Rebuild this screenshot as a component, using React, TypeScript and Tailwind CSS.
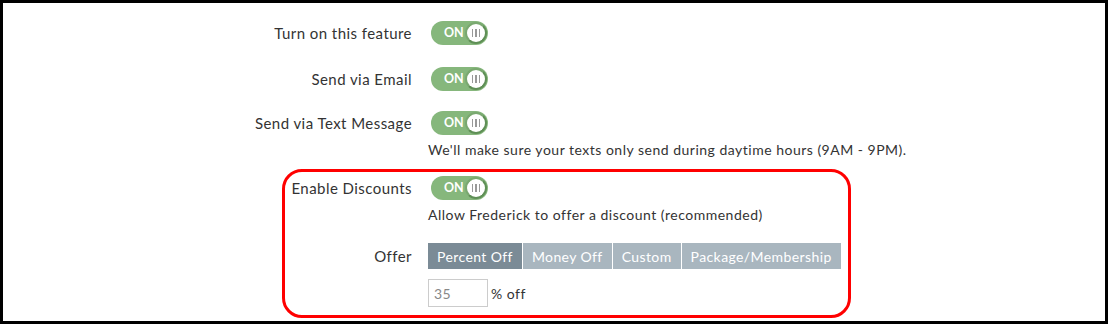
import React from "react";

function Toggle() {
  return (
    <div className="relative flex h-6 w-[57px] shrink-0 items-center rounded-full bg-[#86b77c]">
      <span className="pl-[13px] text-[12.5px] font-bold leading-none tracking-normal text-white">
        ON
      </span>
      <span className="absolute right-[1px] top-[1px] flex h-[22px] w-[22px] items-center justify-center gap-[2px] rounded-full border-2 border-[#5f8f56] border-l-[#7aa870] border-t-[#7aa870] bg-white">
        <span className="h-[8px] w-[1.5px] bg-[#999]" />
        <span className="h-[8px] w-[1.5px] bg-[#999]" />
        <span className="h-[8px] w-[1.5px] bg-[#999]" />
      </span>
    </div>
  );
}

function Row({
  label,
  labelWidth,
  gap = "pl-[19px]",
  children,
  className,
}: {
  label?: string;
  labelWidth: string;
  gap?: string;
  children: React.ReactNode;
  className?: string;
}) {
  return (
    <div className={`flex items-center ${className ?? ""}`}>
      <div className={`${labelWidth} shrink-0 text-right text-[15px] tracking-[0.45px]`}>{label}</div>
      <div className={gap}>{children}</div>
    </div>
  );
}

export default function App() {
  const tabs = ["Percent Off", "Money Off", "Custom", "Package/Membership"];

  return (
    <div
      className="h-[324px] w-[1108px] overflow-hidden border-[3px] border-black bg-white text-[14px] tracking-[0.5px] text-[#333]"
      style={{ fontFamily: "Lato, 'Open Sans', sans-serif" }}
    >
      <div className="pt-[18px]">
        <Row label="Turn on this feature" labelWidth="w-[409px]">
          <Toggle />
        </Row>
        <Row label="Send via Email" labelWidth="w-[409px]" className="mt-[22px]">
          <Toggle />
        </Row>
        <Row label="Send via Text Message" labelWidth="w-[409px]" className="mt-[20px]">
          <Toggle />
        </Row>
        <div className="ml-[425px] mt-[5px] leading-5">
          We'll make sure your texts only send during daytime hours (9AM - 9PM).
        </div>

        {/* Discounts section */}
        <div className="ml-[279px] mt-[9px] h-[149px] w-[569px] rounded-[20px] border-[3px] border-[#ff0000] pt-[4px]">
          <Row label="Enable Discounts" labelWidth="w-[127px]">
            <Toggle />
          </Row>
          <div className="ml-[143px] mt-[5px] leading-5">
            Allow Frederick to offer a discount (recommended)
          </div>
          <Row label="Offer" labelWidth="w-[127px]" gap="pl-4" className="mt-[18px]">
            <div className="flex h-[26px]">
              {tabs.map((t, i) => (
                <div
                  key={t}
                  className={`flex shrink-0 items-center whitespace-nowrap px-[9px] tracking-[0.4px] text-white ${
                    i === 0 ? "bg-[#7b8b96]" : "bg-[#a9b6bf]"
                  } ${i === tabs.length - 1 ? "" : "border-r border-white"}`}
                >
                  {t}
                </div>
              ))}
            </div>
          </Row>
          <div className="ml-[143px] mt-[10px] flex items-center gap-[3px]">
            <div className="flex h-[28px] w-[60px] items-center border border-[#ccc] px-[5px] text-[#888]">
              35
            </div>
            <span>% off</span>
          </div>
        </div>
      </div>
    </div>
  );
}
